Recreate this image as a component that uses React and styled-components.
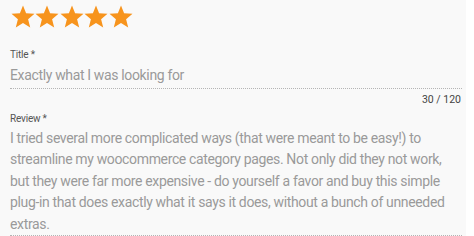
import React from "react";
import styled, { createGlobalStyle } from "styled-components";

const GlobalStyle = createGlobalStyle`
	html, body{
		margin: 0;
		padding: 0;
		background: #ffffff;
	}
	body{
		font-family: Roboto, "Liberation Sans", sans-serif;
	}
`;

const Card = styled.div`
	width: 466px;
	height: 236px;
	box-sizing: border-box;
	background: #f9f9f9;
	padding: 5px 4px 0 10px;
	overflow: hidden;
`;

const Stars = styled.div`
	display: flex;
	gap: 0.5px;
	margin-left: 0.5px;
`;

const Field = styled.div`
	display: flex;
	flex-direction: column;
	gap: 3px;
	margin-top: ${ (p) => p.$top }px;
`;

const Label = styled.label`
	font-size: 10px;
	color: #555;
	line-height: 12px;
	letter-spacing: -0.2px;
`;

const Value = styled.div`
	font-size: 14px;
	letter-spacing: -0.35px;
	color: #9a9a9a;
	line-height: ${ (p) => p.$lh }px;
	border-bottom: 1px dotted #b5b5b5;
	padding-bottom: ${ (p) => p.$pb }px;
`;

const Counter = styled.div`
	font-size: 10.5px;
	color: #444;
	text-align: right;
	margin-top: 4px;
	padding-right: 1px;
	line-height: 14px;
`;

const Star = () => (
	<svg width="24" height="24" viewBox="0 0 24 24">
		<path
			d="M12 0.6 L15.1 8.2 L23.5 8.8 L17.1 14.2 L19.2 22.6 L12 18 L4.8 22.6 L6.9 14.2 L0.5 8.8 L8.9 8.2 Z"
			fill="#f7941d"
		/>
	</svg>
);

const App = () => {
	return(
		<React.Fragment>
			<GlobalStyle />
			<Card>
				<Stars>
					{ [0, 1, 2, 3, 4].map((i) => <Star key={ i } />) }
				</Stars>
				<Field $top={ 20 }>
					<Label>Title *</Label>
					<Value $lh={ 22 } $pb={ 2 }>Exactly what I was looking for</Value>
				</Field>
				<Counter>30 / 120</Counter>
				<Field $top={ 5.5 }>
					<Label>Review *</Label>
					<Value $lh={ 21.5 } $pb={ 0 }>
						I tried several more complicated ways (that were meant to be easy!) to
						streamline my woocommerce category pages. Not only did they not work,
						but they were far more expensive - do yourself a favor and buy this simple
						plug-in that does exactly what it says it does, without a bunch of unneeded
						extras.
					</Value>
				</Field>
			</Card>
		</React.Fragment>
	);
};

export default App;
